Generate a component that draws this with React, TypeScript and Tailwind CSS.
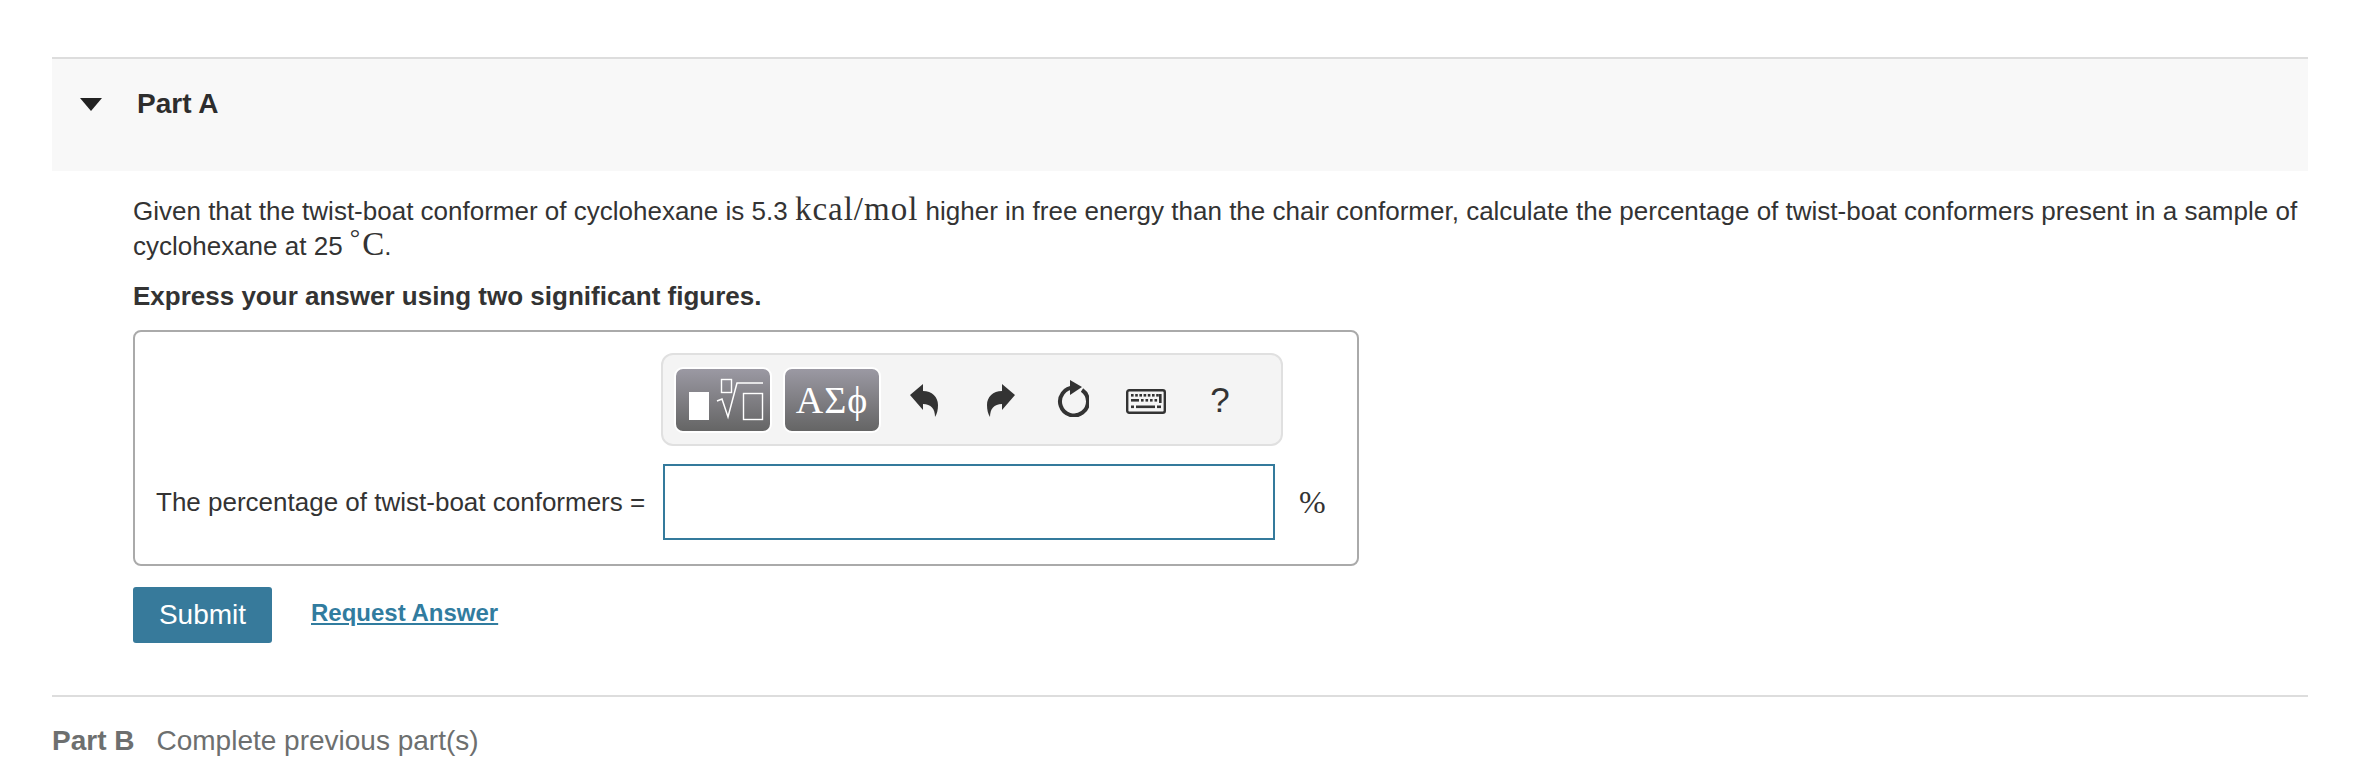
import { ReactNode } from 'react'

const sans = 'font-["Liberation_Sans",Arial,sans-serif]'
const serif = 'font-["Liberation_Serif","Times_New_Roman",serif]'

function ToolButton({ children }: { children: ReactNode }) {
  return (
    <div className="flex h-[66px] w-[98px] items-center justify-center rounded-[9px] border-2 border-white bg-gradient-to-b from-[#9b99a3] to-[#656565]">
      {children}
    </div>
  )
}

function TemplatesIcon() {
  return (
    <svg width="94" height="62" viewBox="0 0 94 62" fill="none">
      <rect x="13" y="23" width="20" height="28" fill="#fff" />
      <rect x="45.5" y="10.5" width="10" height="13" stroke="#fff" strokeWidth="1.4" />
      <path d="M41 32l5-2 6 18 9-34h26" stroke="#fff" strokeWidth="1.5" />
      <rect x="67.5" y="24.5" width="19" height="26" stroke="#fff" strokeWidth="1.4" />
    </svg>
  )
}

function UndoIcon({ flip }: { flip?: boolean }) {
  return (
    <svg width="30" height="34" viewBox="0 0 30 34" className={flip ? '-scale-x-100' : ''}>
      <path d="M1 12L14 1v7c9 0 15 6 15 14 0 5-1 9-3 12 0-8-4-13-12-13v6z" fill="#333" />
    </svg>
  )
}

function ResetIcon() {
  return (
    <svg width="34" height="38" viewBox="0 0 34 38" fill="none" className="-mt-[3px]">
      <path d="M19 8.5A14 14 0 1 0 27 11" stroke="#333" strokeWidth="4" />
      <path d="M15 1l12 7-12 8z" fill="#333" />
    </svg>
  )
}

function KeyboardIcon() {
  const keys = []
  for (let i = 0; i < 7; i++) keys.push(<rect key={i} x={5 + i * 4.2} y="5" width="2.6" height="2.6" fill="#333" />)
  return (
    <svg width="40" height="25" viewBox="0 0 40 25" fill="none" className="mt-[3px]">
      <rect x="1.2" y="1.2" width="37.6" height="22.6" rx="2" stroke="#333" strokeWidth="2.4" />
      {keys}
      <rect x="5" y="10" width="8" height="2.6" fill="#333" />
      <rect x="15" y="10" width="2.6" height="2.6" fill="#333" />
      <rect x="19.5" y="10" width="2.6" height="2.6" fill="#333" />
      <rect x="24" y="10" width="2.6" height="2.6" fill="#333" />
      <rect x="28.5" y="10" width="2.6" height="2.6" fill="#333" />
      <rect x="33" y="5" width="2.6" height="9" fill="#333" />
      <rect x="5" y="16.5" width="3" height="2.6" fill="#333" />
      <rect x="10" y="16.5" width="19" height="2.6" fill="#333" />
      <rect x="31" y="16.5" width="4" height="2.6" fill="#333" />
    </svg>
  )
}

function Slot({ children }: { children: ReactNode }) {
  return <div className="flex w-[74px] justify-center">{children}</div>
}

export default function App() {
  return (
    <div className={`${sans} min-h-[774px] bg-white px-[52px] pt-[57px] text-[26px] leading-[34px] text-[#333]`}>
      <section className="border-t-2 border-[#ddd]">
        <div className="flex h-[112px] items-start bg-[#f8f8f8] pl-[28px] pt-[29px]">
          <svg width="22" height="13" viewBox="0 0 22 13" className="mt-[10px]">
            <path d="M0 0h22L11 13z" fill="#222" />
          </svg>
          <h2 className="ml-[35px] text-[28px] font-bold leading-[32px] text-[#2d2d2d]">Part A</h2>
        </div>

        <div className="pl-[81px] pt-[22px]">
          <p className="w-[2190px]">
            Given that the twist-boat conformer of cyclohexane is 5.3{' '}
            <span className={`${serif} text-[33px] leading-none tracking-[1px]`}>kcal/mol</span> higher in free energy
            than the chair conformer, calculate the percentage of twist-boat conformers present in a sample of
            cyclohexane at 25{' '}
            <span className={`${serif} text-[33px] leading-none`}>
              <span className="relative -top-[9px] text-[26px] leading-none">°</span>
              <span className="ml-[2px]">C</span>
            </span>
            .
          </p>
          <p className="mt-[16px] font-bold">Express your answer using two significant figures.</p>

          <div className="mt-[17px] h-[236px] w-[1226px] rounded-[8px] border-2 border-[#aaa] pl-[21px]">
            <div className="ml-[505px] mt-[21px] flex h-[93px] w-[622px] items-center rounded-[12px] border-2 border-[#e0e0e0] bg-[#f4f4f4] pl-[11px]">
              <ToolButton>
                <TemplatesIcon />
              </ToolButton>
              <div className="ml-[11px]">
                <ToolButton>
                  <span className={`${serif} text-[38px] tracking-[1px] text-white`}>ΑΣϕ</span>
                </ToolButton>
              </div>
              <div className="ml-[6px] flex items-center">
                <Slot><UndoIcon /></Slot>
                <Slot><div className="ml-[5px]"><UndoIcon flip /></div></Slot>
                <Slot><ResetIcon /></Slot>
                <Slot><KeyboardIcon /></Slot>
                <Slot><span className="text-[35px] text-[#333]">?</span></Slot>
              </div>
            </div>

            <div className="mt-[18px] flex items-center">
              <span className="w-[507px]">The percentage of twist-boat conformers =</span>
              <div className="h-[76px] w-[612px] border-2 border-[#347a9c] bg-white" />
              <span className={`${serif} ml-[24px] text-[32px]`}>%</span>
            </div>
          </div>

          <div className="mt-[21px] flex items-start">
            <button className="h-[56px] w-[139px] rounded-[3px] bg-[#377a9b] text-[28px] text-white">Submit</button>
            <a className="ml-[39px] mt-[9px] text-[24px] font-bold text-[#317c9f] underline">Request Answer</a>
          </div>
        </div>
      </section>

      <section className="mt-[52px] border-t-2 border-[#ddd] pt-[27px] text-[28px] text-[#6d6f6f]">
        <span className="font-bold">Part B</span>
        <span className="ml-[22px]">Complete previous part(s)</span>
      </section>
    </div>
  )
}
